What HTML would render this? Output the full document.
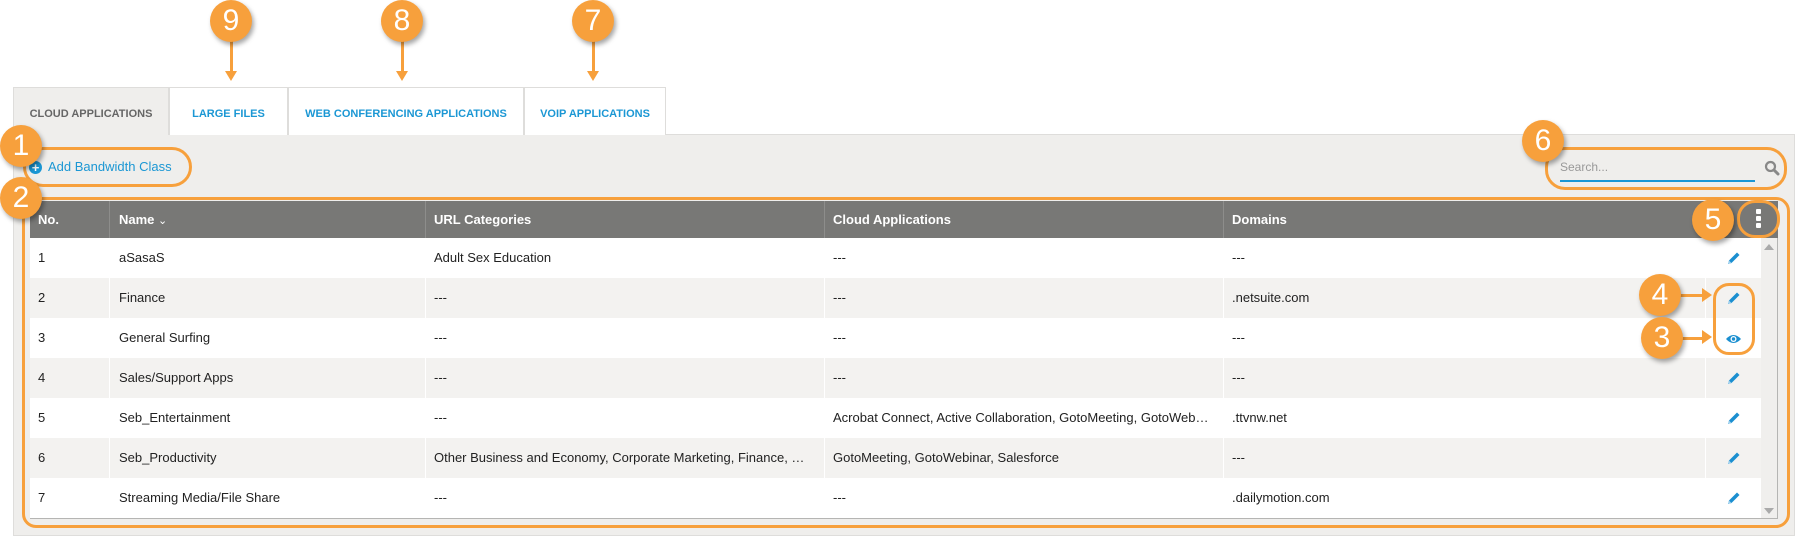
<!DOCTYPE html>
<html><head><style>
*{margin:0;padding:0;box-sizing:border-box}
body{width:1801px;height:542px;background:#fff;font-family:"Liberation Sans",Arial,sans-serif;position:relative;overflow:hidden}
.a{position:absolute}
.circ{position:absolute;width:42px;height:42px;border-radius:50%;background:#f7a03c;color:#fff;font-size:30px;line-height:42px;text-align:center;box-shadow:2px 3px 5px rgba(0,0,0,.35);z-index:5}
.tab{position:absolute;top:87px;height:48px;border:1px solid #dedddb;border-bottom:none;background:#fff;color:#1b97d4;font-weight:bold;font-size:11px;line-height:52px;text-align:center}
.row{position:absolute;left:30px;width:1731px;height:40px;font-size:13px;color:#222;line-height:40px}
.row span{position:absolute;top:0}
.sep{position:absolute;top:0;width:1px;height:40px;background:#fff}
.hd{position:absolute;color:#fff;font-weight:bold;font-size:13px;top:201px;line-height:37px}
.hs{position:absolute;top:201px;width:1px;height:37px;background:#8d8d8b}
.vl{position:absolute;width:3px;background:#f7a03c}
</style></head><body>

<div class="circ" style="left:210px;top:0px">9</div>
<div class="circ" style="left:381px;top:0px">8</div>
<div class="circ" style="left:572px;top:0px">7</div>
<div class="vl" style="left:230px;top:40px;height:33px"></div>
<div class="vl" style="left:401px;top:40px;height:33px"></div>
<div class="vl" style="left:592px;top:40px;height:33px"></div>
<svg class="a" style="left:0;top:0" width="700" height="90"><g fill="#f7a03c"><polygon points="225,71 237,71 231,81"/><polygon points="396,71 408,71 402,81"/><polygon points="587,71 599,71 593,81"/></g></svg>

<div class="a" style="left:13px;top:134px;width:1782px;height:402px;background:#efeeec;border:1px solid #dedddb"></div>
<div class="tab" style="left:13px;width:156px;background:#efeeec;color:#666">CLOUD APPLICATIONS</div>
<div class="tab" style="left:169px;width:119px">LARGE FILES</div>
<div class="tab" style="left:288px;width:236px">WEB CONFERENCING APPLICATIONS</div>
<div class="tab" style="left:524px;width:142px">VOIP APPLICATIONS</div>

<div class="a" style="left:23px;top:147px;width:169px;height:40px;border:3px solid #f7a03c;border-radius:20px"></div>
<div class="a" style="left:29px;top:161px;width:13px;height:13px;border-radius:50%;background:#1b97d4;color:#fff;font-size:13px;font-weight:bold;line-height:13px;text-align:center">+</div>
<div class="a" style="left:48px;top:159px;font-size:13px;color:#1b97d4">Add Bandwidth Class</div>
<div class="circ" style="left:0px;top:125px">1</div>

<div class="a" style="left:1545px;top:147px;width:242px;height:43px;border:3px solid #f7a03c;border-radius:20px"></div>
<div class="a" style="left:1560px;top:160px;font-size:12px;color:#999">Search...</div>
<div class="a" style="left:1560px;top:180px;width:195px;height:2px;background:#1b97d4"></div>
<svg class="a" style="left:1764px;top:160px" width="16" height="16"><circle cx="6.5" cy="6.5" r="4.5" fill="none" stroke="#888" stroke-width="2.2"/><line x1="10" y1="10" x2="14" y2="14" stroke="#888" stroke-width="3" stroke-linecap="round"/></svg>
<div class="circ" style="left:1522px;top:120px">6</div>

<div class="a" style="left:30px;top:201px;width:1748px;height:318px;border:1px solid #b5b5b3;background:#f0efed"></div>
<div class="a" style="left:30px;top:201px;width:1748px;height:37px;background:#787876"></div>
<div class="hd" style="left:38px">No.</div>
<div class="hs" style="left:109px"></div>
<div class="hd" style="left:119px">Name <span style="font-weight:normal;font-size:11px">&#8964;</span></div>
<div class="hs" style="left:425px"></div>
<div class="hd" style="left:434px">URL Categories</div>
<div class="hs" style="left:824px"></div>
<div class="hd" style="left:833px">Cloud Applications</div>
<div class="hs" style="left:1223px"></div>
<div class="hd" style="left:1232px">Domains</div>
<div class="a" style="left:1756px;top:209px;width:5px;height:5px;background:#fff;border-radius:1px"></div>
<div class="a" style="left:1756px;top:216px;width:5px;height:5px;background:#fff;border-radius:1px"></div>
<div class="a" style="left:1756px;top:223px;width:5px;height:5px;background:#fff;border-radius:1px"></div>

<div class="row" style="top:238px;background:#fff"><span style="left:8px">1</span><span style="left:89px">aSasaS</span><span style="left:404px">Adult Sex Education</span><span style="left:803px">---</span><span style="left:1202px">---</span></div>
<div class="row" style="top:278px;background:#f3f2f0"><div class="sep" style="left:79px"></div><div class="sep" style="left:395px"></div><div class="sep" style="left:794px"></div><div class="sep" style="left:1193px"></div><div class="sep" style="left:1675px"></div><span style="left:8px">2</span><span style="left:89px">Finance</span><span style="left:404px">---</span><span style="left:803px">---</span><span style="left:1202px">.netsuite.com</span></div>
<div class="row" style="top:318px;background:#fff"><span style="left:8px">3</span><span style="left:89px">General Surfing</span><span style="left:404px">---</span><span style="left:803px">---</span><span style="left:1202px">---</span></div>
<div class="row" style="top:358px;background:#f3f2f0"><div class="sep" style="left:79px"></div><div class="sep" style="left:395px"></div><div class="sep" style="left:794px"></div><div class="sep" style="left:1193px"></div><div class="sep" style="left:1675px"></div><span style="left:8px">4</span><span style="left:89px">Sales/Support Apps</span><span style="left:404px">---</span><span style="left:803px">---</span><span style="left:1202px">---</span></div>
<div class="row" style="top:398px;background:#fff"><span style="left:8px">5</span><span style="left:89px">Seb_Entertainment</span><span style="left:404px">---</span><span style="left:803px">Acrobat Connect, Active Collaboration, GotoMeeting, GotoWeb…</span><span style="left:1202px">.ttvnw.net</span></div>
<div class="row" style="top:438px;background:#f3f2f0"><div class="sep" style="left:79px"></div><div class="sep" style="left:395px"></div><div class="sep" style="left:794px"></div><div class="sep" style="left:1193px"></div><div class="sep" style="left:1675px"></div><span style="left:8px">6</span><span style="left:89px">Seb_Productivity</span><span style="left:404px">Other Business and Economy, Corporate Marketing, Finance, …</span><span style="left:803px">GotoMeeting, GotoWebinar, Salesforce</span><span style="left:1202px">---</span></div>
<div class="row" style="top:478px;background:#fff"><span style="left:8px">7</span><span style="left:89px">Streaming Media/File Share</span><span style="left:404px">---</span><span style="left:803px">---</span><span style="left:1202px">.dailymotion.com</span></div>

<svg class="a" style="left:1764px;top:244px" width="10" height="8"><polygon points="0,6 10,6 5,0" fill="#aaa"/></svg>
<svg class="a" style="left:1764px;top:508px" width="10" height="8"><polygon points="0,0 10,0 5,6" fill="#aaa"/></svg>

<svg width="0" height="0" style="position:absolute"><defs>
<g id="pen"><path d="M1 13 L2 9.5 L10 1.5 L12.5 4 L4.5 12 Z" fill="#1b8fd0"/><path d="M1 13 L2 9.5 L4.5 12 Z" fill="#9fd1ee"/></g>
</defs></svg>
<svg class="a" style="left:1727px;top:251px" width="14" height="14"><use href="#pen"/></svg>
<svg class="a" style="left:1727px;top:291px" width="14" height="14"><use href="#pen"/></svg>
<svg class="a" style="left:1725px;top:333px" width="17" height="12"><path d="M1 6 Q8.5 -2 16 6 Q8.5 14 1 6Z" fill="#1b8fd0"/><circle cx="8.5" cy="6" r="3" fill="#fff"/><circle cx="8.5" cy="6" r="1.7" fill="#1b8fd0"/></svg>
<svg class="a" style="left:1727px;top:371px" width="14" height="14"><use href="#pen"/></svg>
<svg class="a" style="left:1727px;top:411px" width="14" height="14"><use href="#pen"/></svg>
<svg class="a" style="left:1727px;top:451px" width="14" height="14"><use href="#pen"/></svg>
<svg class="a" style="left:1727px;top:491px" width="14" height="14"><use href="#pen"/></svg>

<div class="a" style="left:22px;top:197px;width:1768px;height:331px;border:3px solid #f7a03c;border-radius:14px"></div>
<div class="circ" style="left:0px;top:177px">2</div>

<div class="a" style="left:1737px;top:200px;width:43px;height:38px;border:3px solid #f7a03c;border-radius:18px"></div>
<div class="circ" style="left:1692px;top:199px">5</div>

<div class="a" style="left:1713px;top:283px;width:42px;height:72px;border:3px solid #f7a03c;border-radius:16px"></div>
<div class="circ" style="left:1639px;top:274px">4</div>
<div class="circ" style="left:1641px;top:317px">3</div>
<div class="vl" style="left:1680px;top:294px;height:3px;width:26px"></div>
<div class="vl" style="left:1682px;top:337px;height:3px;width:24px"></div>
<svg class="a" style="left:1700px;top:288px" width="14" height="56"><polygon points="2,0 12,7 2,14" fill="#f7a03c"/><polygon points="2,42 12,49 2,56" fill="#f7a03c"/></svg>

</body></html>
